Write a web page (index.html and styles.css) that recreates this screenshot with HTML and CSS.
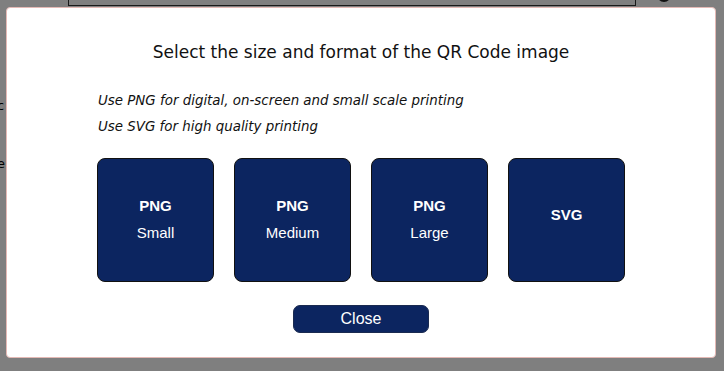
FILE: index.html
```html
<!DOCTYPE html>
<html>
<head>
<meta charset="utf-8">
<link rel="stylesheet" href="styles.css">
</head>
<body>
<div class="page">
  <div class="topbar">
    <div class="field"></div>
    <div class="dot"></div>
  </div>
  <div class="frag frag1">c</div>
  <div class="frag frag2">e</div>
</div>
<div class="overlay">
  <div class="modal">
    <h2 class="title">Select the size and format of the QR Code image</h2>
    <p class="hint hint1">Use PNG for digital, on-screen and small scale printing</p>
    <p class="hint">Use SVG for high quality printing</p>
    <div class="options">
      <button class="opt"><b>PNG</b><span>Small</span></button>
      <button class="opt"><b>PNG</b><span>Medium</span></button>
      <button class="opt"><b>PNG</b><span>Large</span></button>
      <button class="opt opt-single"><b>SVG</b></button>
    </div>
    <div class="actions">
      <button class="close">Close</button>
    </div>
  </div>
</div>
</body>
</html>
```
FILE: styles.css
```css
html, body {
  margin: 0;
  padding: 0;
  width: 724px;
  height: 371px;
  overflow: hidden;
  background: #fff;
  font-family: "DejaVu Sans", Verdana, sans-serif;
}
.page {
  position: relative;
  height: 371px;
}
.topbar {
  display: flex;
  align-items: flex-end;
  padding-left: 68px;
  height: 6px;
}
.field {
  width: 566px;
  height: 30px;
  border: 1px solid #333;
  background: #fff;
}
.dot {
  width: 14px;
  height: 14px;
  border-radius: 50%;
  background: #222;
  margin-left: 21px;
  margin-bottom: 4px;
}
.frag {
  font-family: "DejaVu Sans", sans-serif;
  font-size: 13px;
  color: #000;
  margin-left: -3px;
}
.frag1 { margin-top: 92px; }
.frag2 { margin-top: 43px; }
.overlay {
  position: absolute;
  inset: 0;
  background: rgba(0, 0, 0, 0.5);
}
.modal {
  position: absolute;
  left: 6px;
  top: 7px;
  width: 708px;
  height: 349px;
  background: #fff;
  border: 1px solid #e4b9b5;
  border-radius: 4px;
}
.title {
  margin: 33px 0 0;
  text-align: center;
  font-weight: normal;
  font-size: 17px;
  color: #111;
  line-height: 22px;
}
.hint {
  margin: 0 0 0 91px;
  font-style: italic;
  font-size: 13.4px;
  color: #111;
  line-height: 26px;
}
.hint1 { margin-top: 25px; }
.options {
  display: flex;
  gap: 20px;
  padding-left: 90px;
  margin-top: 18px;
}
.opt {
  width: 117px;
  height: 124px;
  background: #0c2560;
  border: 1px solid #111;
  border-radius: 8px;
  color: #fff;
  font-family: "Liberation Sans", Arial, sans-serif;
  font-size: 15px;
  display: flex;
  flex-direction: column;
  align-items: center;
  justify-content: center;
  gap: 10px;
  padding: 0 0 2px;
}
.opt-single { padding-bottom: 12px; }
.opt b { font-weight: bold; line-height: 17px; }
.opt span { line-height: 17px; }
.actions {
  display: flex;
  justify-content: center;
  margin-top: 23px;
}
.close {
  width: 136px;
  height: 28px;
  background: #0c2560;
  border: 1px solid #1a2a50;
  border-radius: 7px;
  color: #fff;
  font-family: "Liberation Sans", Arial, sans-serif;
  font-size: 16px;
  padding: 0;
}
```
